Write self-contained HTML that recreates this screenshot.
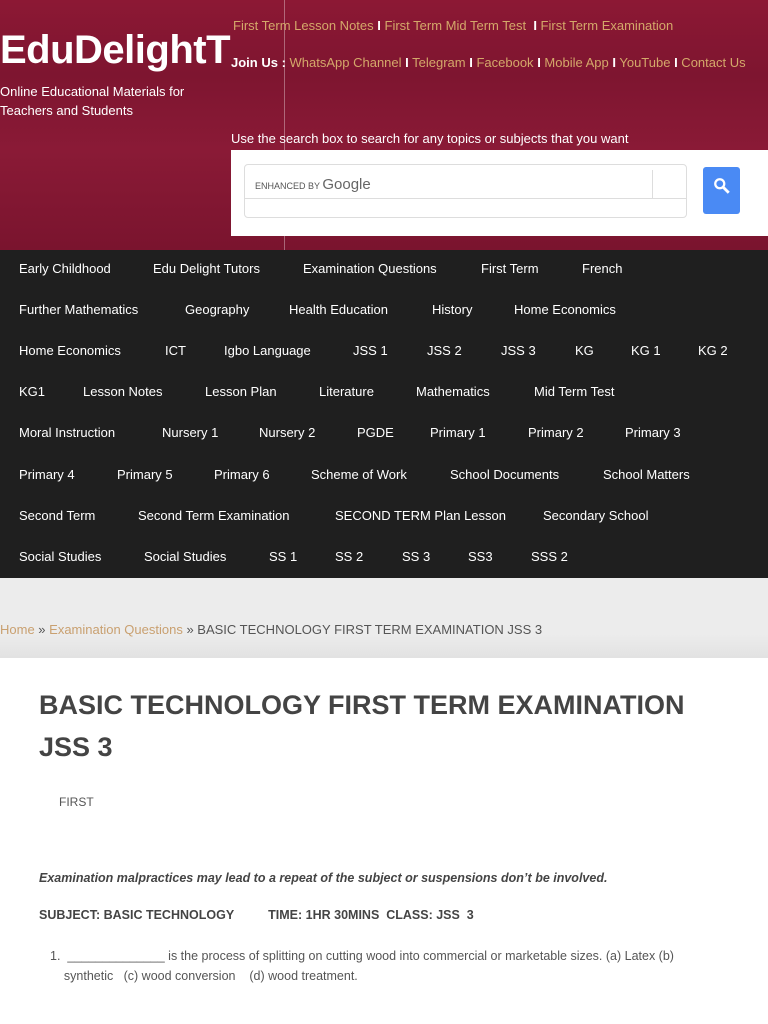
<!DOCTYPE html><html><head><meta charset="utf-8"><style>
*{margin:0;padding:0;box-sizing:border-box}
body{width:768px;height:1024px;overflow:hidden;font-family:"Liberation Sans",sans-serif;background:#fff;position:relative}
.hd{position:absolute;left:0;top:0;width:768px;height:250px;background:linear-gradient(180deg,#8c1834 0%,#7e1530 30%,#8a1a36 60%,#7a142e 100%)}
.a{position:absolute;white-space:nowrap}
.gold{color:#d4a86a}
.nav{position:absolute;left:0;top:250px;width:768px;height:328px;background:#1f1f1f}
.nav span{position:absolute;color:#fff;font-size:13px;white-space:nowrap}
.crumb{position:absolute;left:0;top:578px;width:768px;height:80px;background:linear-gradient(#ececec 70%,#e2e2e2)}
</style></head><body>
<div class="hd"></div>
<div class="a" style="left:284px;top:0;width:1px;height:250px;background:rgba(255,255,255,.35)"></div>
<div class="a gold" style="left:233px;top:18px;font-size:13px;">First Term Lesson Notes <b style="color:#fff">I</b> First Term Mid Term Test&nbsp; <b style="color:#fff">I</b> First Term Examination</div>
<div class="a" style="left:0;top:28px;font-size:40px;font-weight:bold;color:#fff;letter-spacing:-0.5px">EduDelightT</div>
<div class="a gold" style="left:231px;top:55px;font-size:13px;"><b style="color:#fff">Join Us :</b> WhatsApp Channel <b style="color:#fff">I</b> Telegram <b style="color:#fff">I</b> Facebook <b style="color:#fff">I</b> Mobile App <b style="color:#fff">I</b> YouTube <b style="color:#fff">I</b> Contact Us</div>
<div class="a" style="left:0;top:82px;font-size:13px;color:#fff;line-height:19px">Online Educational Materials for<br>Teachers and Students</div>
<div class="a" style="left:231px;top:131px;font-size:13px;color:#fff">Use the search box to search for any topics or subjects that you want</div>
<div class="a" style="left:231px;top:150px;width:537px;height:86px;background:#fff"></div>
<div class="a" style="left:244px;top:164px;width:443px;height:54px;border:1px solid #ddd;border-radius:4px"></div>
<div class="a" style="left:245px;top:170px;width:441px;height:29px;border-bottom:1px solid #ddd"></div>
<div class="a" style="left:652px;top:170px;width:1px;height:29px;background:#ddd"></div>
<div class="a" style="left:255px;top:176px;font-size:9px;color:#555">ENHANCED BY <span style="font-size:15px;color:#666">Google</span></div>
<div class="a" style="left:703px;top:167px;width:37px;height:47px;background:#4a8af4;border-radius:3px"></div>
<svg class="a" style="left:713px;top:177px" width="18" height="18" viewBox="0 0 16 16"><circle cx="6" cy="6" r="4" fill="none" stroke="#fff" stroke-width="2"/><path d="M9 9l5 5" stroke="#fff" stroke-width="2.5"/></svg>
<div class="nav">
<span style="left:19px;top:11px">Early Childhood</span><span style="left:153px;top:11px">Edu Delight Tutors</span><span style="left:303px;top:11px">Examination Questions</span><span style="left:481px;top:11px">First Term</span><span style="left:582px;top:11px">French</span>
<span style="left:19px;top:52px">Further Mathematics</span><span style="left:185px;top:52px">Geography</span><span style="left:289px;top:52px">Health Education</span><span style="left:432px;top:52px">History</span><span style="left:514px;top:52px">Home Economics</span>
<span style="left:19px;top:93px">Home Economics</span><span style="left:165px;top:93px">ICT</span><span style="left:224px;top:93px">Igbo Language</span><span style="left:353px;top:93px">JSS 1</span><span style="left:427px;top:93px">JSS 2</span><span style="left:501px;top:93px">JSS 3</span><span style="left:575px;top:93px">KG</span><span style="left:631px;top:93px">KG 1</span><span style="left:698px;top:93px">KG 2</span>
<span style="left:19px;top:134px">KG1</span><span style="left:83px;top:134px">Lesson Notes</span><span style="left:205px;top:134px">Lesson Plan</span><span style="left:319px;top:134px">Literature</span><span style="left:416px;top:134px">Mathematics</span><span style="left:534px;top:134px">Mid Term Test</span>
<span style="left:19px;top:175px">Moral Instruction</span><span style="left:162px;top:175px">Nursery 1</span><span style="left:259px;top:175px">Nursery 2</span><span style="left:357px;top:175px">PGDE</span><span style="left:430px;top:175px">Primary 1</span><span style="left:528px;top:175px">Primary 2</span><span style="left:625px;top:175px">Primary 3</span>
<span style="left:19px;top:217px">Primary 4</span><span style="left:117px;top:217px">Primary 5</span><span style="left:214px;top:217px">Primary 6</span><span style="left:311px;top:217px">Scheme of Work</span><span style="left:450px;top:217px">School Documents</span><span style="left:603px;top:217px">School Matters</span>
<span style="left:19px;top:258px">Second Term</span><span style="left:138px;top:258px">Second Term Examination</span><span style="left:335px;top:258px">SECOND TERM Plan Lesson</span><span style="left:543px;top:258px">Secondary School</span>
<span style="left:19px;top:299px">Social Studies</span><span style="left:144px;top:299px">Social Studies</span><span style="left:269px;top:299px">SS 1</span><span style="left:335px;top:299px">SS 2</span><span style="left:402px;top:299px">SS 3</span><span style="left:468px;top:299px">SS3</span><span style="left:531px;top:299px">SSS 2</span>
</div>
<div class="crumb"></div>
<div class="a" style="left:0;top:622px;font-size:13px;color:#555"><span style="color:#c9a070">Home</span> » <span style="color:#c9a070">Examination Questions</span> » BASIC TECHNOLOGY FIRST TERM EXAMINATION JSS 3</div>
<div class="a" style="left:39px;top:684px;font-size:27px;font-weight:bold;color:#444;line-height:42px;white-space:normal;width:700px">BASIC TECHNOLOGY FIRST TERM EXAMINATION JSS 3</div>
<div class="a" style="left:59px;top:795px;font-size:12px;color:#555">FIRST</div>
<div class="a" style="left:39px;top:871px;font-size:12.5px;font-weight:bold;font-style:italic;color:#444">Examination malpractices may lead to a repeat of the subject or suspensions don’t be involved.</div>
<div class="a" style="left:39px;top:908px;font-size:12.5px;font-weight:bold;color:#444">SUBJECT: BASIC TECHNOLOGY<span style="display:inline-block;width:34px"></span>TIME: 1HR 30MINS&nbsp; CLASS: JSS&nbsp; 3</div>
<div class="a" style="left:50px;top:946px;font-size:12.5px;color:#555;line-height:20px;white-space:normal;width:700px">1. &nbsp;______________ is the process of splitting on cutting wood into commercial or marketable sizes. (a) Latex (b)<br>&nbsp;&nbsp;&nbsp;&nbsp;synthetic &nbsp; (c) wood conversion &nbsp;&nbsp; (d) wood treatment.</div>
</body></html>
